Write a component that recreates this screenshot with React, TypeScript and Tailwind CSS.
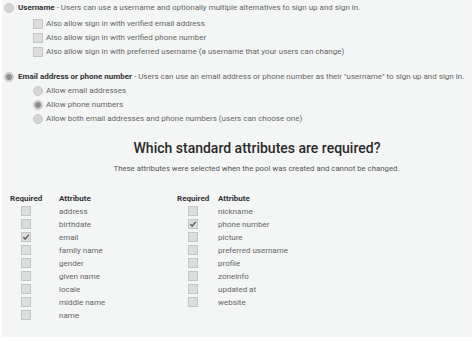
import React from 'react';

const leftAttrs: Array<[string, boolean]> = [
  ['address', false],
  ['birthdate', false],
  ['email', true],
  ['family name', false],
  ['gender', false],
  ['given name', false],
  ['locale', false],
  ['middle name', false],
  ['name', false],
];

const rightAttrs: Array<[string, boolean]> = [
  ['nickname', false],
  ['phone number', true],
  ['picture', false],
  ['preferred username', false],
  ['profile', false],
  ['zoneinfo', false],
  ['updated at', false],
  ['website', false],
];

const Radio = ({ checked = false }: { checked?: boolean }) => (
  <span className="w-[10px] h-[10px] rounded-full bg-[#d4d5d5] border border-[#c6c7c7] flex items-center justify-center shrink-0">
    {checked && <span className="w-[6px] h-[6px] rounded-full bg-[#8d8e8e]" />}
  </span>
);

const Check = ({ checked = false }: { checked?: boolean }) => (
  <span className="w-[10px] h-[10px] bg-[#dcdddd] border border-[#c4c5c5] flex items-center justify-center shrink-0">
    {checked && (
      <svg width="8" height="8" viewBox="0 0 8 8">
        <path d="M1.2 4.2 L3.2 6 L6.8 1.8" fill="none" stroke="#555" strokeWidth="1.3" />
      </svg>
    )}
  </span>
);

const AttrTable = ({ rows, wide }: { rows: Array<[string, boolean]>; wide?: boolean }) => (
  <div className={`grid grid-cols-[32px_1fr] content-start ${wide ? 'gap-x-[17px]' : 'gap-x-[9px]'}`}>
    <div className="text-[8px] font-bold text-[#333] h-[12px] leading-[12px]">Required</div>
    <div className="text-[8px] font-bold text-[#333] h-[12px] leading-[12px]">Attribute</div>
    {rows.map(([name, checked]) => (
      <React.Fragment key={name}>
        <div className="h-[13px] flex items-center justify-center">
          <Check checked={checked} />
        </div>
        <div className="h-[13px] leading-[13px] text-[8px] text-[#666]">{name}</div>
      </React.Fragment>
    ))}
  </div>
);

const Option = ({ children, kind, checked }: { children: React.ReactNode; kind: 'radio' | 'check'; checked?: boolean }) => (
  <div className="flex items-center gap-[3px] h-[14px] pl-[29px]">
    {kind === 'radio' ? <Radio checked={checked} /> : <Check checked={checked} />}
    <span className="text-[8px] text-[#666] whitespace-nowrap">{children}</span>
  </div>
);

export default function App() {
  return (
    <div className="w-[474px] h-[341px] bg-white" style={{ fontFamily: 'Roboto, "Liberation Sans", sans-serif' }}>
      <div className="ml-[2px] mr-[2px] h-[337px] bg-[#f4f5f5] pl-[2px] pt-[1px] overflow-hidden">
        <div className="flex items-center gap-[4px] h-[13px]">
          <Radio />
          <span className="text-[8px] text-[#666] whitespace-nowrap">
            <b className="text-[#333]">Username</b> - Users can use a username and optionally multiple alternatives to sign up and sign in.
          </span>
        </div>
        <div className="pt-[3px]">
          <Option kind="check">Also allow sign in with verified email address</Option>
          <Option kind="check">Also allow sign in with verified phone number</Option>
          <Option kind="check">Also allow sign in with preferred username (a username that your users can change)</Option>
        </div>

        <div className="flex items-center gap-[4px] h-[13px] mt-[11px]">
          <Radio checked />
          <span className="text-[8px] text-[#666] whitespace-nowrap">
            <b className="text-[#333]">Email address or phone number</b> - Users can use an email address or phone number as their "username" to sign up and sign in.
          </span>
        </div>
        <div className="pt-[1px] [&>div]:h-[14px]">
          <Option kind="radio">Allow email addresses</Option>
          <Option kind="radio" checked>Allow phone numbers</Option>
          <Option kind="radio">Allow both email addresses and phone numbers (users can choose one)</Option>
        </div>

        <h2 className="mt-[13px] text-center text-[14px] font-medium text-[#2a2a2a] leading-[18px] pl-[38px]">
          Which standard attributes are required?
        </h2>
        <p className="mt-[6px] text-center text-[7.8px] text-[#555] pl-[37px]">
          These attributes were selected when the pool was created and cannot be changed.
        </p>

        <div className="mt-[18px] ml-[6px] grid grid-cols-[167px_1fr]">
          <AttrTable rows={leftAttrs} wide />
          <AttrTable rows={rightAttrs} />
        </div>
      </div>
    </div>
  );
}
